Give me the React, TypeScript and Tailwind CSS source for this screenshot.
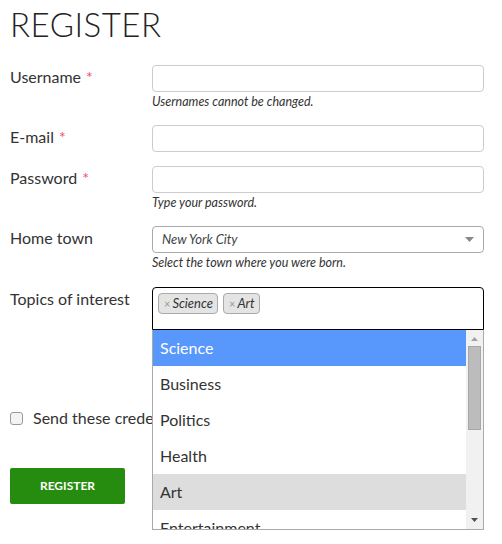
import React from "react";

const topics = ["Science", "Business", "Politics", "Health", "Art", "Entertainment"];

function Label({ text, required }: { text: string; required?: boolean }) {
  return (
    <div className="w-[152px] shrink-0 pl-[10px] pt-[1px] text-[16px] leading-[22px] text-[#333]">
      {text}
      {required && <span className="ml-[5px] text-[#f0506e]">*</span>}
    </div>
  );
}

function Help({ children }: { children: React.ReactNode }) {
  return <p className="mt-[1px] text-[12.5px] italic leading-[17px] text-[#333]">{children}</p>;
}

export default function App() {
  return (
    <div className="relative h-[544px] w-[502px] overflow-hidden bg-white font-['Lato',_'Noto_Sans',_sans-serif] text-[#333]">
      {/* Heading */}
      <h1 className="pl-[10px] pt-[4px] text-[33px] font-light leading-[40px] tracking-[0.5px] text-[#222]">REGISTER</h1>

      <form className="mt-[21px]">
        <div className="mb-[15px] flex">
          <Label text="Username" required />
          <div className="w-[332px]">
            <input className="block h-[27px] w-full rounded-[4px] border border-[#ccc] px-2" />
            <Help>Usernames cannot be changed.</Help>
          </div>
        </div>

        <div className="mb-[14px] flex">
          <Label text="E-mail" required />
          <div className="w-[332px]">
            <input className="block h-[27px] w-full rounded-[4px] border border-[#ccc] px-2" />
          </div>
        </div>

        <div className="mb-[15px] flex">
          <Label text="Password" required />
          <div className="w-[332px]">
            <input type="password" className="block h-[27px] w-full rounded-[4px] border border-[#ccc] px-2" />
            <Help>Type your password.</Help>
          </div>
        </div>

        <div className="mb-[16px] flex">
          <Label text="Home town" />
          <div className="w-[332px]">
            <div className="flex h-[27px] w-full items-center justify-between rounded-[4px] border border-[#aaa] pl-[9px] pr-[9px]">
              <span className="text-[13px] italic text-[#444]">New York City</span>
              <svg width="9" height="5" viewBox="0 0 9 5">
                <path d="M0 0h9L4.5 5z" fill="#888" />
              </svg>
            </div>
            <Help>Select the town where you were born.</Help>
          </div>
        </div>

        <div className="flex">
          <Label text="Topics of interest" />
          <div className="relative w-[332px]">
            <div className="flex h-[43px] w-full items-start gap-[5px] rounded-t-[4px] border border-black pl-[5px] pt-[5px]">
              {["Science", "Art"].map((t) => (
                <span
                  key={t}
                  className="flex h-[21px] items-center rounded-[4px] border border-[#aaa] bg-[#e4e4e4] pl-[5px] pr-[4px] text-[13px] italic leading-none text-[#333]"
                >
                  <span className="mr-[2px] not-italic text-[11px] text-[#999]">×</span>
                  {t}
                </span>
              ))}
            </div>

            {/* Open dropdown */}
            <div className="absolute left-0 top-[43px] z-10 flex h-[200px] w-[332px] border-x border-b border-[#aaa] bg-white">
              <ul className="flex-1 overflow-hidden">
                {topics.map((t, i) => (
                  <li
                    key={t}
                    className={
                      "flex h-[36px] items-center pl-[7px] text-[16px] " +
                      (i === 0 ? "bg-[#5897fb] text-white" : i === 4 ? "bg-[#ddd] text-[#333]" : "text-[#333]")
                    }
                  >
                    {t}
                  </li>
                ))}
              </ul>
              <div className="flex w-[17px] flex-col items-center bg-[#f1f1f1]">
                <svg className="mt-[7px]" width="7" height="4" viewBox="0 0 7 4">
                  <path d="M3.5 0L7 4H0z" fill="#a3a3a3" />
                </svg>
                <div className="mt-[5px] h-[84px] w-[13px] border border-[#a8a8a8] bg-[#bcbcbc]" />
                <div className="flex-1" />
                <svg className="mb-[7px]" width="7" height="4" viewBox="0 0 7 4">
                  <path d="M0 0h7L3.5 4z" fill="#505050" />
                </svg>
              </div>
            </div>
          </div>
        </div>

        <label className="mt-[76px] flex items-center pl-[10px] text-[16px] text-[#333]">
          <span className="h-[13px] w-[13px] rounded-[3px] border border-[#999] bg-[#f3f3f3]" />
          <span className="ml-[10px]">Send these credentials via email.</span>
        </label>

        <button
          type="button"
          className="ml-[10px] mt-[38px] h-[36px] w-[115px] rounded-[2px] bg-[#268c10] text-[12px] font-bold text-white"
        >
          REGISTER
        </button>
      </form>
    </div>
  );
}
